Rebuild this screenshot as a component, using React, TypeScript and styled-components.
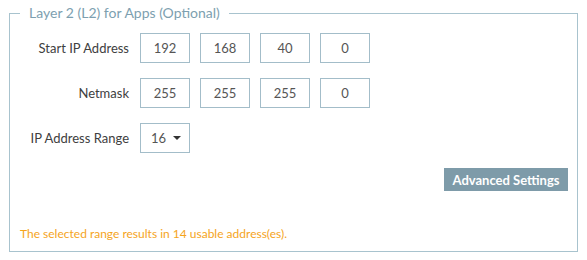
import { FC } from 'react';
import styled, { createGlobalStyle } from 'styled-components';

const GlobalStyle = createGlobalStyle`
  html, body {
    margin: 0;
    padding: 0;
    background: #ffffff;
  }
  body {
    font-family: Lato, "Open Sans", Arial, sans-serif;
  }
`;

const Page = styled.div`
  width: 587px;
  height: 260px;
  padding: 5px 9px 0 9px;
  box-sizing: border-box;
`;

const Fieldset = styled.fieldset`
  margin: 0;
  padding: 0 9px 10px 10px;
  border: 1px solid #a8c3ce;
  height: 247px;
  box-sizing: border-box;
  display: flex;
  flex-direction: column;
`;

const Legend = styled.legend`
  margin-left: 0;
  padding: 0 9px;
  font-size: 14px;
  line-height: 16px;
  color: #7d9fb0;
`;

const Grid = styled.div`
  display: grid;
  grid-template-columns: 109px auto;
  column-gap: 11px;
  row-gap: 15px;
  margin-top: 12px;
  align-items: center;
`;

const Label = styled.label`
  text-align: right;
  font-size: 13px;
  color: #404040;
`;

const Octets = styled.div`
  display: flex;
  gap: 10px;
`;

const Octet = styled.div`
  width: 50px;
  height: 30px;
  box-sizing: border-box;
  border: 1px solid #a3bdc9;
  display: flex;
  align-items: center;
  justify-content: center;
  font-size: 13px;
  color: #555;
`;

const Select = styled.div`
  width: 50px;
  height: 30px;
  box-sizing: border-box;
  border: 1px solid #a3bdc9;
  display: flex;
  align-items: center;
  justify-content: space-between;
  padding: 0 8px 0 10px;
  font-size: 13px;
  color: #555;
`;

const Caret = styled.span`
  width: 0;
  height: 0;
  border-left: 4px solid transparent;
  border-right: 4px solid transparent;
  border-top: 4px solid #333;
`;

const ButtonRow = styled.div`
  display: flex;
  justify-content: flex-end;
  margin-top: 15px;
`;

const Button = styled.button`
  width: 124px;
  height: 23px;
  border: none;
  background: #7e9ba9;
  color: #ffffff;
  font-family: inherit;
  font-weight: 700;
  font-size: 13px;
  padding: 0;
  cursor: pointer;
`;

const Message = styled.div`
  margin-top: auto;
  font-size: 12px;
  color: #f5a41c;
`;

interface IpRowProps {
  label: string;
  values: string[];
}

const IpRow: FC<IpRowProps> = ({ label, values }) => (
  <>
    <Label>{label}</Label>
    <Octets>
      {values.map((v, i) => (
        <Octet key={i}>{v}</Octet>
      ))}
    </Octets>
  </>
);

const App: FC = () => {
  return (
    <Page>
      <GlobalStyle />
      <Fieldset>
        <Legend>Layer 2 (L2) for Apps (Optional)</Legend>
        <Grid>
          <IpRow label="Start IP Address" values={['192', '168', '40', '0']} />
          <IpRow label="Netmask" values={['255', '255', '255', '0']} />
          <Label>IP Address Range</Label>
          <div>
            <Select>
              16
              <Caret />
            </Select>
          </div>
        </Grid>
        <ButtonRow>
          <Button>Advanced Settings</Button>
        </ButtonRow>
        <Message>The selected range results in 14 usable address(es).</Message>
      </Fieldset>
    </Page>
  );
};

export default App;
